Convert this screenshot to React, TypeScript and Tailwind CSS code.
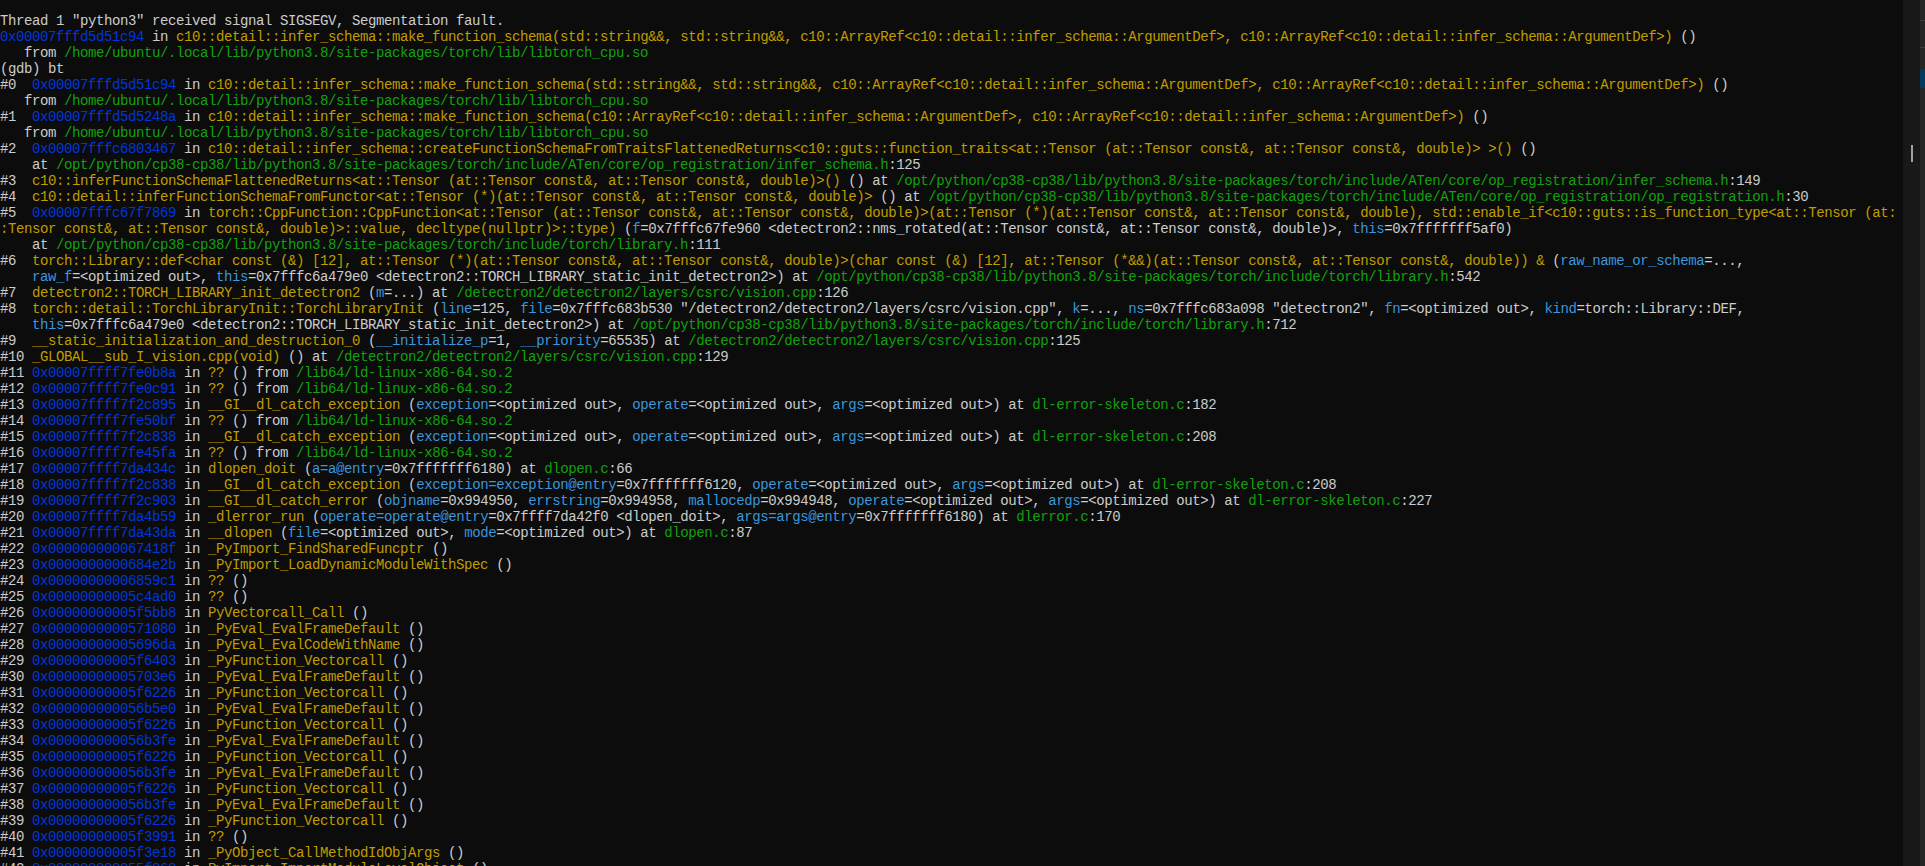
import React from "react";

type Tone = "w" | "a" | "y" | "g" | "c";
type Seg = [Tone, string];

const tones: Record<Tone, string> = {
  w: "text-[#cccccc]",
  a: "text-[#0037da]",
  y: "text-[#c19c00]",
  g: "text-[#13a10e]",
  c: "text-[#3a96dd]",
};

const LIB_TORCH = "/home/ubuntu/.local/lib/python3.8/site-packages/torch/lib/libtorch_cpu.so";
const LD_LINUX = "/lib64/ld-linux-x86-64.so.2";
const INFER_SCHEMA = "/opt/python/cp38-cp38/lib/python3.8/site-packages/torch/include/ATen/core/op_registration/infer_schema.h";
const OP_REG = "/opt/python/cp38-cp38/lib/python3.8/site-packages/torch/include/ATen/core/op_registration/op_registration.h";
const LIBRARY_H = "/opt/python/cp38-cp38/lib/python3.8/site-packages/torch/include/torch/library.h";
const VISION = "/detectron2/detectron2/layers/csrc/vision.cpp";
const OPT = "=<optimized out>";

// "#n  addr in func ()" is most of the backtrace
const frame = (n: number, addr: string, fn: string): Seg[] => [
  ["w", `#${n} `.padEnd(4, " ")],
  ["a", addr],
  ["w", " in "],
  ["y", fn],
  ["w", " ()"],
];
const dso = (n: number, addr: string): Seg[] => [...frame(n, addr, "??"), ["w", " from "], ["g", LD_LINUX]];
const from = (path: string): Seg[] => [["w", "   from "], ["g", path]];

const MAKE_SCHEMA =
  "c10::detail::infer_schema::make_function_schema(std::string&&, std::string&&, c10::ArrayRef<c10::detail::infer_schema::ArgumentDef>, c10::ArrayRef<c10::detail::infer_schema::ArgumentDef>)";

const lines: Seg[][] = [
  [["w", 'Thread 1 "python3" received signal SIGSEGV, Segmentation fault.']],
  [["a", "0x00007fffd5d51c94"], ["w", " in "], ["y", MAKE_SCHEMA], ["w", " ()"]],
  from(LIB_TORCH),
  [["w", "(gdb) bt"]],
  frame(0, "0x00007fffd5d51c94", MAKE_SCHEMA),
  from(LIB_TORCH),
  frame(1, "0x00007fffd5d5248a", "c10::detail::infer_schema::make_function_schema(c10::ArrayRef<c10::detail::infer_schema::ArgumentDef>, c10::ArrayRef<c10::detail::infer_schema::ArgumentDef>)"),
  from(LIB_TORCH),
  frame(2, "0x00007fffc6803467", "c10::detail::infer_schema::createFunctionSchemaFromTraitsFlattenedReturns<c10::guts::function_traits<at::Tensor (at::Tensor const&, at::Tensor const&, double)> >()"),
  [["w", "    at "], ["g", INFER_SCHEMA], ["w", ":125"]],
  [["w", "#3  "], ["y", "c10::inferFunctionSchemaFlattenedReturns<at::Tensor (at::Tensor const&, at::Tensor const&, double)>()"], ["w", " () at "], ["g", INFER_SCHEMA], ["w", ":149"]],
  [["w", "#4  "], ["y", "c10::detail::inferFunctionSchemaFromFunctor<at::Tensor (*)(at::Tensor const&, at::Tensor const&, double)>"], ["w", " () at "], ["g", OP_REG], ["w", ":30"]],
  [["w", "#5  "], ["a", "0x00007fffc67f7869"], ["w", " in "], ["y", "torch::CppFunction::CppFunction<at::Tensor (at::Tensor const&, at::Tensor const&, double)>(at::Tensor (*)(at::Tensor const&, at::Tensor const&, double), std::enable_if<c10::guts::is_function_type<at::Tensor (at:"]],
  [["y", ":Tensor const&, at::Tensor const&, double)>::value, decltype(nullptr)>::type)"], ["w", " ("], ["c", "f"], ["w", "=0x7fffc67fe960 <detectron2::nms_rotated(at::Tensor const&, at::Tensor const&, double)>, "], ["c", "this"], ["w", "=0x7fffffff5af0)"]],
  [["w", "    at "], ["g", LIBRARY_H], ["w", ":111"]],
  [["w", "#6  "], ["y", "torch::Library::def<char const (&) [12], at::Tensor (*)(at::Tensor const&, at::Tensor const&, double)>(char const (&) [12], at::Tensor (*&&)(at::Tensor const&, at::Tensor const&, double)) &"], ["w", " ("], ["c", "raw_name_or_schema"], ["w", "=...,"]],
  [["w", "    "], ["c", "raw_f"], ["w", `${OPT}, `], ["c", "this"], ["w", "=0x7fffc6a479e0 <detectron2::TORCH_LIBRARY_static_init_detectron2>) at "], ["g", LIBRARY_H], ["w", ":542"]],
  [["w", "#7  "], ["y", "detectron2::TORCH_LIBRARY_init_detectron2"], ["w", " ("], ["c", "m"], ["w", "=...) at "], ["g", VISION], ["w", ":126"]],
  [["w", "#8  "], ["y", "torch::detail::TorchLibraryInit::TorchLibraryInit"], ["w", " ("], ["c", "line"], ["w", "=125, "], ["c", "file"], ["w", `=0x7fffc683b530 "${VISION}", `], ["c", "k"], ["w", "=..., "], ["c", "ns"], ["w", '=0x7fffc683a098 "detectron2", '], ["c", "fn"], ["w", `${OPT}, `], ["c", "kind"], ["w", "=torch::Library::DEF,"]],
  [["w", "    "], ["c", "this"], ["w", "=0x7fffc6a479e0 <detectron2::TORCH_LIBRARY_static_init_detectron2>) at "], ["g", LIBRARY_H], ["w", ":712"]],
  [["w", "#9  "], ["y", "__static_initialization_and_destruction_0"], ["w", " ("], ["c", "__initialize_p"], ["w", "=1, "], ["c", "__priority"], ["w", "=65535) at "], ["g", VISION], ["w", ":125"]],
  [["w", "#10 "], ["y", "_GLOBAL__sub_I_vision.cpp(void)"], ["w", " () at "], ["g", VISION], ["w", ":129"]],
  dso(11, "0x00007ffff7fe0b8a"),
  dso(12, "0x00007ffff7fe0c91"),
  [["w", "#13 "], ["a", "0x00007ffff7f2c895"], ["w", " in "], ["y", "__GI__dl_catch_exception"], ["w", " ("], ["c", "exception"], ["w", `${OPT}, `], ["c", "operate"], ["w", `${OPT}, `], ["c", "args"], ["w", `${OPT}) at `], ["g", "dl-error-skeleton.c"], ["w", ":182"]],
  dso(14, "0x00007ffff7fe50bf"),
  [["w", "#15 "], ["a", "0x00007ffff7f2c838"], ["w", " in "], ["y", "__GI__dl_catch_exception"], ["w", " ("], ["c", "exception"], ["w", `${OPT}, `], ["c", "operate"], ["w", `${OPT}, `], ["c", "args"], ["w", `${OPT}) at `], ["g", "dl-error-skeleton.c"], ["w", ":208"]],
  dso(16, "0x00007ffff7fe45fa"),
  [["w", "#17 "], ["a", "0x00007ffff7da434c"], ["w", " in "], ["y", "dlopen_doit"], ["w", " ("], ["c", "a=a@entry"], ["w", "=0x7fffffff6180) at "], ["g", "dlopen.c"], ["w", ":66"]],
  [["w", "#18 "], ["a", "0x00007ffff7f2c838"], ["w", " in "], ["y", "__GI__dl_catch_exception"], ["w", " ("], ["c", "exception=exception@entry"], ["w", "=0x7fffffff6120, "], ["c", "operate"], ["w", `${OPT}, `], ["c", "args"], ["w", `${OPT}) at `], ["g", "dl-error-skeleton.c"], ["w", ":208"]],
  [["w", "#19 "], ["a", "0x00007ffff7f2c903"], ["w", " in "], ["y", "__GI__dl_catch_error"], ["w", " ("], ["c", "objname"], ["w", "=0x994950, "], ["c", "errstring"], ["w", "=0x994958, "], ["c", "mallocedp"], ["w", "=0x994948, "], ["c", "operate"], ["w", `${OPT}, `], ["c", "args"], ["w", `${OPT}) at `], ["g", "dl-error-skeleton.c"], ["w", ":227"]],
  [["w", "#20 "], ["a", "0x00007ffff7da4b59"], ["w", " in "], ["y", "_dlerror_run"], ["w", " ("], ["c", "operate=operate@entry"], ["w", "=0x7ffff7da42f0 <dlopen_doit>, "], ["c", "args=args@entry"], ["w", "=0x7fffffff6180) at "], ["g", "dlerror.c"], ["w", ":170"]],
  [["w", "#21 "], ["a", "0x00007ffff7da43da"], ["w", " in "], ["y", "__dlopen"], ["w", " ("], ["c", "file"], ["w", `${OPT}, `], ["c", "mode"], ["w", `${OPT}) at `], ["g", "dlopen.c"], ["w", ":87"]],
  frame(22, "0x000000000067418f", "_PyImport_FindSharedFuncptr"),
  frame(23, "0x0000000000684e2b", "_PyImport_LoadDynamicModuleWithSpec"),
  frame(24, "0x00000000006859c1", "??"),
  frame(25, "0x00000000005c4ad0", "??"),
  frame(26, "0x00000000005f5bb8", "PyVectorcall_Call"),
  frame(27, "0x0000000000571080", "_PyEval_EvalFrameDefault"),
  frame(28, "0x00000000005696da", "_PyEval_EvalCodeWithName"),
  frame(29, "0x00000000005f6403", "_PyFunction_Vectorcall"),
  frame(30, "0x00000000005703e6", "_PyEval_EvalFrameDefault"),
  frame(31, "0x00000000005f6226", "_PyFunction_Vectorcall"),
  frame(32, "0x000000000056b5e0", "_PyEval_EvalFrameDefault"),
  frame(33, "0x00000000005f6226", "_PyFunction_Vectorcall"),
  frame(34, "0x000000000056b3fe", "_PyEval_EvalFrameDefault"),
  frame(35, "0x00000000005f6226", "_PyFunction_Vectorcall"),
  frame(36, "0x000000000056b3fe", "_PyEval_EvalFrameDefault"),
  frame(37, "0x00000000005f6226", "_PyFunction_Vectorcall"),
  frame(38, "0x000000000056b3fe", "_PyEval_EvalFrameDefault"),
  frame(39, "0x00000000005f6226", "_PyFunction_Vectorcall"),
  frame(40, "0x00000000005f3991", "??"),
  frame(41, "0x00000000005f3e18", "_PyObject_CallMethodIdObjArgs"),
  frame(42, "0x000000000055f060", "PyImport_ImportModuleLevelObject"),
];

function TermLine({ segs }: { segs: Seg[] }) {
  return (
    <div className="h-4 leading-4 whitespace-pre">
      {segs.map(([tone, text], i) => (
        <span key={i} className={tones[tone]}>
          {text}
        </span>
      ))}
    </div>
  );
}

export default function App() {
  return (
    <div className="flex h-[866px] w-[1925px] overflow-hidden bg-[#0c0c0c]">
      {/* terminal output */}
      <div className="w-[1903px] shrink-0 overflow-hidden pt-[13px] font-['Liberation_Mono',monospace] text-[14px] tracking-[-0.4px]">
        {lines.map((segs, i) => (
          <TermLine key={i} segs={segs} />
        ))}
      </div>

      {/* overview ruler */}
      <div className="w-[17px] shrink-0 bg-[#181818] pt-[145px] pl-[8px]">
        <div className="h-[17px] w-[2px] bg-[#a0a0a0]" />
      </div>

      {/* sliver of the next panel */}
      <div className="flex-1 bg-[#252526]">
        <div className="h-[21px] border-b border-[#3c3c3c]" />
        <div className="h-[27px] border-b border-[#3c3c3c]" />
        <div className="h-[21px]" />
        <div className="h-[19px] bg-[#04395e]" />
      </div>
    </div>
  );
}
